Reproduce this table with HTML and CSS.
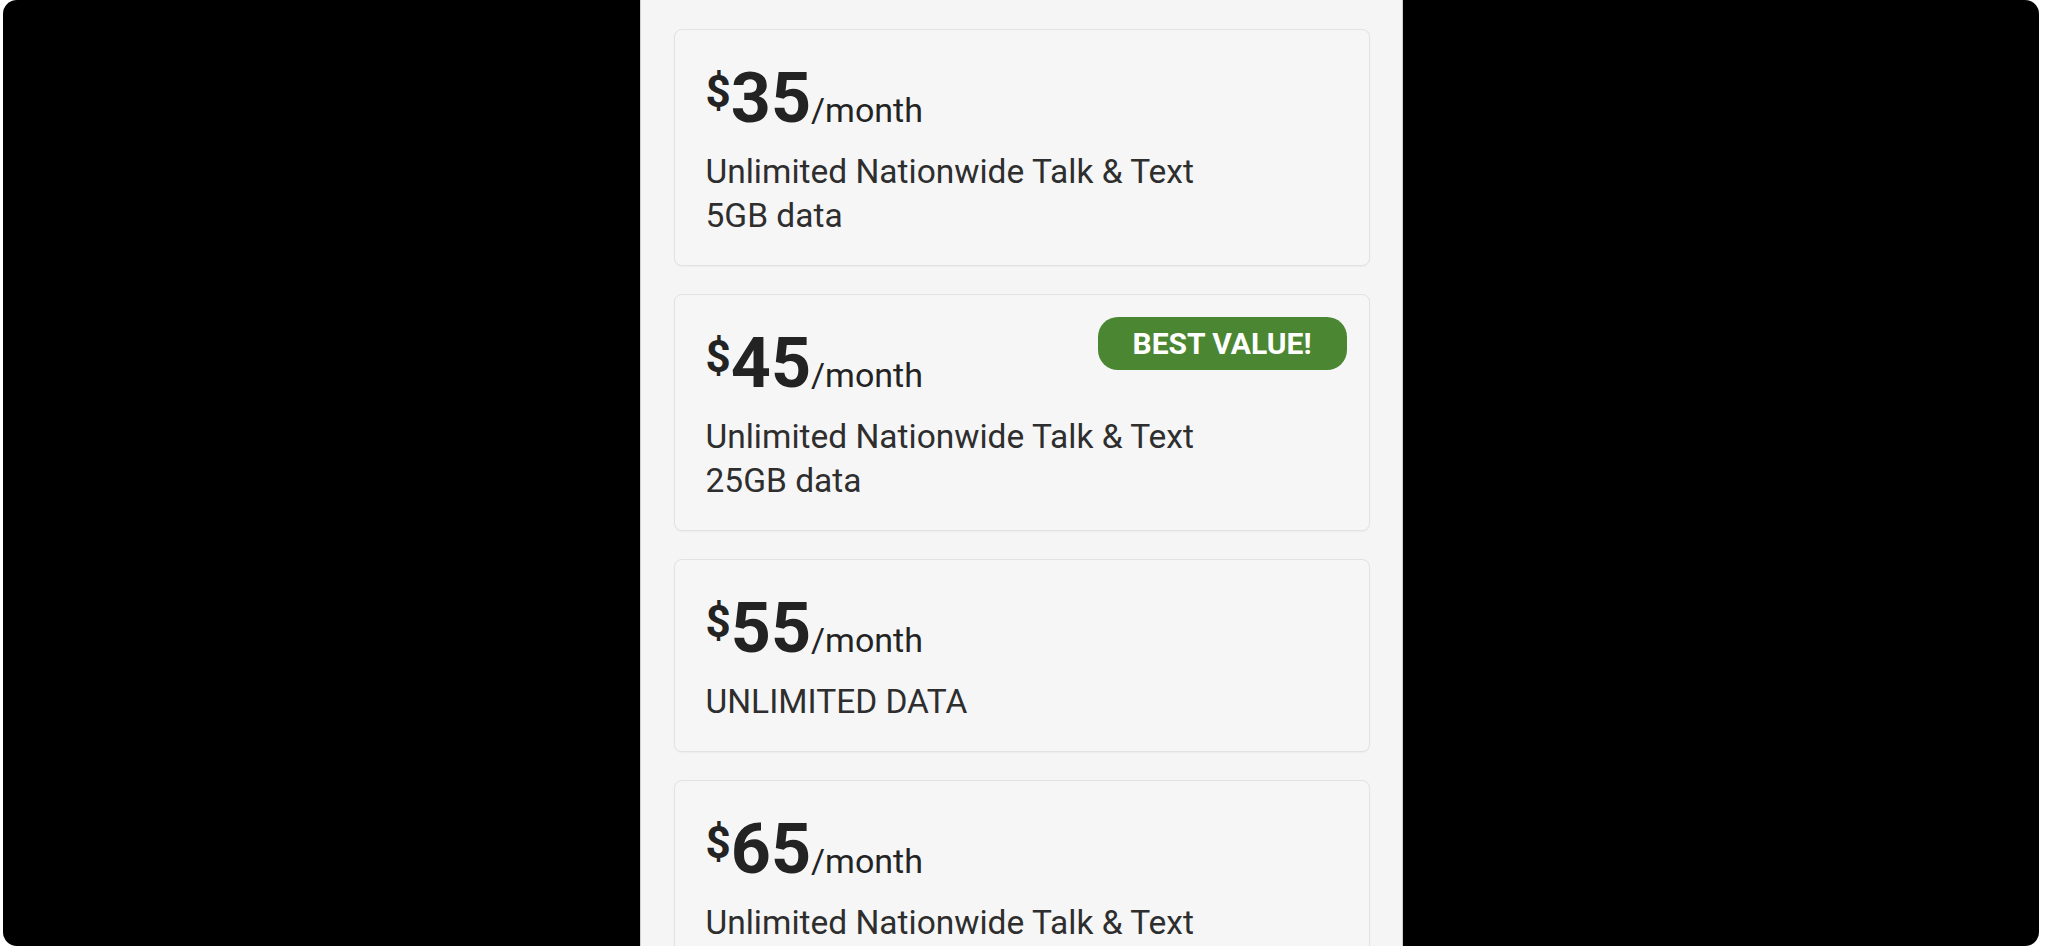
FILE: index.html
```html
<!DOCTYPE html>
<html lang="en">
<head>
  <meta charset="UTF-8" />
  <meta name="viewport" content="width=device-width, initial-scale=1.0"/>
  <title>Plans</title>
  <link rel="stylesheet" href="styles.css">
</head>
<body>

  <div class="frame">
    <main class="screen">

      <div class="plan">
        <div class="price"><span class="cur">$</span>35<span class="per">/month</span></div>
        <div class="desc">
          <p>Unlimited Nationwide Talk &amp; Text</p>
          <p>5GB data</p>
        </div>
      </div>

      <div class="plan">
        <span class="badge">BEST VALUE!</span>
        <div class="price"><span class="cur">$</span>45<span class="per">/month</span></div>
        <div class="desc">
          <p>Unlimited Nationwide Talk &amp; Text</p>
          <p>25GB data</p>
        </div>
      </div>

      <div class="plan">
        <div class="price"><span class="cur">$</span>55<span class="per">/month</span></div>
        <div class="desc">
          <p>UNLIMITED DATA</p>
        </div>
      </div>

      <div class="plan">
        <div class="price"><span class="cur">$</span>65<span class="per">/month</span></div>
        <div class="desc">
          <p>Unlimited Nationwide Talk &amp; Text</p>
        </div>
      </div>

    </main>
  </div>

</body>
</html>
```

FILE: styles.css
```css
body {
  margin: 0;
  background: #fff;
  font-family: Roboto, "Noto Sans", sans-serif;
}
.frame {
  margin-left: 3px;
  width: 2036px;
  height: 946px;
  background: #000;
  border-radius: 14px;
  display: flex;
  justify-content: center;
  overflow: hidden;
}
.screen {
  width: 763px;
  box-sizing: border-box;
  padding: 29px 32px 0 33px;
  background: #f5f5f5;
  border-left: 1px solid #cfcfcf;
  border-right: 1px solid #cfcfcf;
  display: flex;
  flex-direction: column;
  gap: 28px;
  overflow: hidden;
}
.plan {
  position: relative;
  flex-shrink: 0;
  padding: 28px 31px 27px;
  background: #f6f6f6;
  border: 1px solid #e2e2e2;
  border-radius: 8px;
  box-shadow: 0 1px 2px rgba(0,0,0,0.04);
}
.price {
  font-size: 70px;
  line-height: 80px;
  font-weight: 700;
  color: #232323;
}
.cur {
  font-size: 44px;
  line-height: 1;
  vertical-align: 15px;
}
.per {
  font-size: 34px;
  line-height: 1;
  font-weight: 400;
}
.desc {
  margin-top: 12px;
  font-size: 33.5px;
  line-height: 44px;
  color: #2e2e2e;
}
.desc p {
  margin: 0;
}
.badge {
  position: absolute;
  top: 22px;
  right: 22px;
  height: 53px;
  padding: 0 35px;
  border-radius: 20px;
  background: #4b8632;
  color: #fff;
  font-size: 30px;
  font-weight: 700;
  line-height: 53px;
}
```
